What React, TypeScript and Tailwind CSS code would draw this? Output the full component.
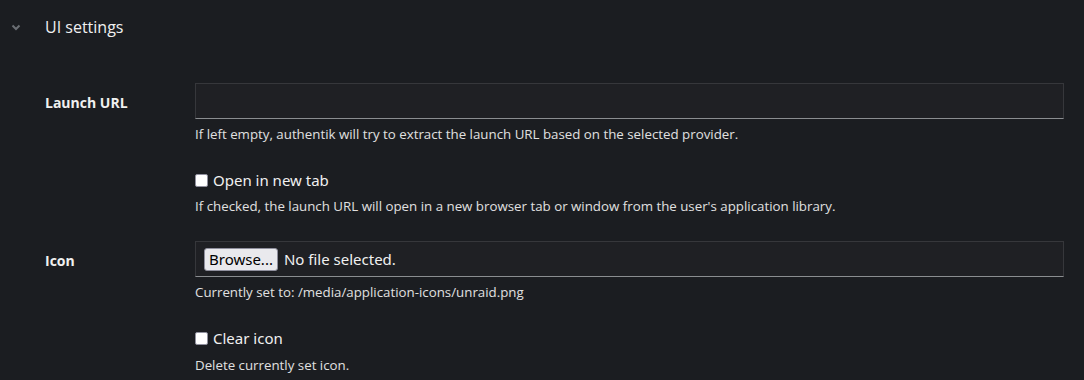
import React from 'react';

const Checkbox: React.FC = () => (
  <span className="inline-block w-[13px] h-[13px] bg-white border border-[#8f8f9d] rounded-[2px] shrink-0" />
);

const FormRow: React.FC<{ label?: string; children: React.ReactNode }> = ({ label, children }) => (
  <div className="flex">
    <div className="w-[195px] shrink-0 pl-[45px] pt-[9px] text-[14px] font-bold text-[#f0f0f0]">{label}</div>
    <div className="flex-1 mr-[20px]">{children}</div>
  </div>
);

const HelperText: React.FC<{ children: React.ReactNode }> = ({ children }) => (
  <p className="mt-[6px] text-[13.3px] text-[#e0e0e0]">{children}</p>
);

export default function App() {
  return (
    <div className="w-[1084px] h-[380px] bg-[#1b1d21] overflow-hidden font-['Open_Sans',sans-serif]">
      {/* 折叠区标题 */}
      <div className="flex items-center h-[54px] pl-[10px]">
        <svg width="12" height="12" viewBox="0 0 12 12" className="text-[#6a6e73]">
          <path d="M2.5 4.5 L6 8 L9.5 4.5" fill="none" stroke="currentColor" strokeWidth="2" />
        </svg>
        <span className="ml-[23px] text-[16px] text-[#f0f0f0]">UI settings</span>
      </div>

      <div className="pt-[29px] flex flex-col gap-[24px]">
        <FormRow label="Launch URL">
          <div className="h-[36px] bg-[#1f2024] border border-[#36373b] border-b-[#8a8d90]" />
          <HelperText>If left empty, authentik will try to extract the launch URL based on the selected provider.</HelperText>
        </FormRow>

        <FormRow>
          <label className="flex items-center gap-[5px] font-['Noto_Sans',sans-serif] text-[15px] text-[#f0f0f0]">
            <Checkbox />
            Open in new tab
          </label>
          <HelperText>If checked, the launch URL will open in a new browser tab or window from the user's application library.</HelperText>
        </FormRow>

        <FormRow label="Icon">
          <div className="h-[36px] bg-[#1f2024] border border-[#36373b] border-b-[#8a8d90] flex items-center pl-[8px] gap-[6px] font-['Noto_Sans',sans-serif] text-[15px]">
            <span className="px-[4px] h-[23px] flex items-center bg-[#e9e9ed] border border-[#8f8f9d] rounded-[3px] text-black">Browse...</span>
            <span className="text-[#f0f0f0]">No file selected.</span>
          </div>
          <HelperText>Currently set to: /media/application-icons/unraid.png</HelperText>
        </FormRow>

        <FormRow>
          <label className="flex items-center gap-[5px] font-['Noto_Sans',sans-serif] text-[15px] text-[#f0f0f0]">
            <Checkbox />
            Clear icon
          </label>
          <HelperText>Delete currently set icon.</HelperText>
        </FormRow>
      </div>
    </div>
  );
}
